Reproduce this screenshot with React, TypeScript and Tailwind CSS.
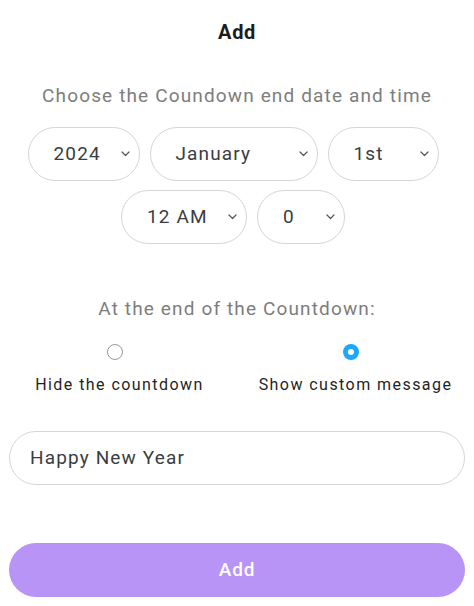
const Chevron = () => (
    <svg width="9" height="6" viewBox="0 0 9 6" fill="none" className="shrink-0">
        <path d="M1 1l3.5 3.5L8 1" stroke="#555" strokeWidth="1.2" strokeLinecap="round" strokeLinejoin="round" />
    </svg>
);

const Select = ({ value, width }: { value: string; width: string }) => (
    <div className={`${width} h-[54px] flex items-center justify-between pl-[25px] pr-[9px] rounded-full border border-[#d6d6d6] bg-white`}>
        <span className="text-[19px] tracking-[0.06em] text-[#3a3d42]">{value}</span>
        <Chevron />
    </div>
);

const App = () => {
    return (
        <div className="w-[474px] h-[606px] bg-white flex flex-col" style={{ fontFamily: 'Roboto, "Liberation Sans", sans-serif' }}>
            {/* Title */}
            <div className="pt-[19px] text-center text-[20px] leading-[26px] font-bold text-[#1c1c1c] tracking-[0.03em]">
                Add
            </div>

            <div className="mt-[38px] text-center text-[19px] leading-[26px] text-[#7d7d7d] tracking-[0.06em]">
                Choose the Coundown end date and time
            </div>

            {/* Date selects */}
            <div className="mt-[18px] flex justify-center gap-[10px] pr-[8px]">
                <Select value="2024" width="w-[112px]" />
                <Select value="January" width="w-[168px]" />
                <Select value="1st" width="w-[111px]" />
            </div>
            <div className="mt-[9px] flex justify-center gap-[10px] pr-[8px]">
                <Select value="12 AM" width="w-[126px]" />
                <Select value="0" width="w-[88px]" />
            </div>

            <div className="mt-[52px] text-center text-[19px] leading-[26px] text-[#7d7d7d] tracking-[0.06em]">
                At the end of the Countdown:
            </div>

            {/* Radios */}
            <div className="mt-[22px] grid grid-cols-2">
                <label className="flex flex-col items-center gap-[15px]">
                    <span className="w-[16px] h-[16px] rounded-full border border-[#9a9a9a] bg-white mr-[8px]" />
                    <span className="text-[16px] leading-[20px] tracking-[0.09em] text-[#1f1f1f] pl-[2px]">Hide the countdown</span>
                </label>
                <label className="flex flex-col items-center gap-[15px]">
                    <span className="w-[16px] h-[16px] rounded-full border-[5px] border-[#1ea7fd] bg-white mr-[10px]" />
                    <span className="text-[16px] leading-[20px] tracking-[0.09em] text-[#1f1f1f]">Show custom message</span>
                </label>
            </div>

            {/* Message input */}
            <div className="mt-[36px] mx-[9px] h-[54px] flex items-center px-[20px] rounded-full border border-[#d6d6d6]">
                <span className="text-[19px] tracking-[0.06em] text-[#3a3d42]">Happy New Year</span>
            </div>

            {/* Submit */}
            <button
                type="button"
                className="mt-[58px] mx-[9px] h-[54px] rounded-full bg-[#b794f6] text-white text-[19px] font-medium tracking-[0.04em]"
            >
                Add
            </button>
        </div>
    );
};

export default App;
